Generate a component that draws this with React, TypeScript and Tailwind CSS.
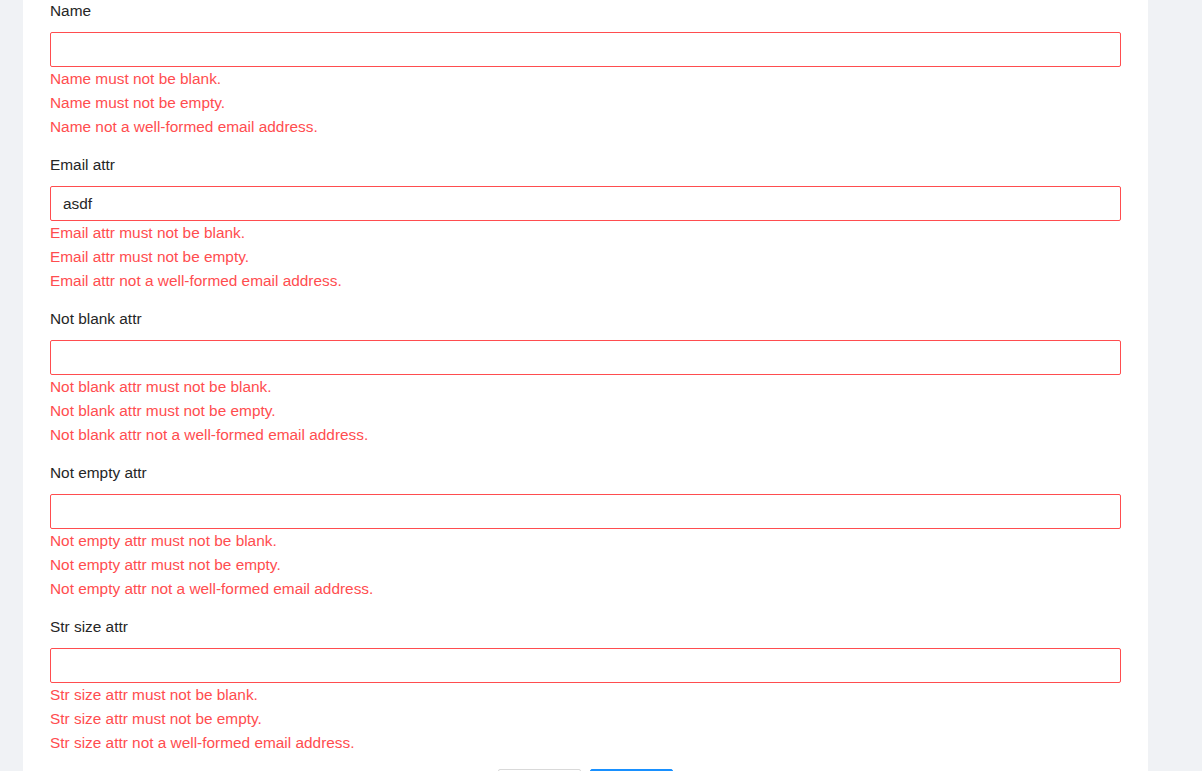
const fields = [
  { label: 'Name', value: '' },
  { label: 'Email attr', value: 'asdf' },
  { label: 'Not blank attr', value: '' },
  { label: 'Not empty attr', value: '' },
  { label: 'Str size attr', value: '' },
];

function Field({ label, value }: { label: string; value: string }) {
  return (
    <div className="mb-[15px] last-of-type:mb-[14px]">
      <div className="h-[22px] text-[15.4px] leading-[22px] text-[#262626]">{label}</div>
      <div className="mt-[10px] flex h-[35px] items-center rounded-[2px] border border-[#ff4d4f] px-[12px] text-[15.4px] text-[#262626]">
        {value}
      </div>
      <div className="text-[15.4px] leading-[24px] text-[#ff4d4f]">
        <div>{label} must not be blank.</div>
        <div>{label} must not be empty.</div>
        <div>{label} not a well-formed email address.</div>
      </div>
    </div>
  );
}

export default function App() {
  return (
    <div className="min-h-screen bg-[#f0f2f5] pl-[23px] font-['Liberation_Sans',Arial,sans-serif]">
      <div className="w-[1125px] bg-white px-[27px] pb-10">
        <div>
          {fields.map((f) => (
            <Field key={f.label} label={f.label} value={f.value} />
          ))}
        </div>
        <div className="flex justify-center gap-[9px]">
          <button className="h-[35px] w-[83px] rounded-[2px] border border-[#d9d9d9] bg-white text-[15.4px] text-[#262626]">
            Reset
          </button>
          <button className="h-[35px] w-[83px] rounded-[2px] border border-[#1890ff] bg-[#1890ff] text-[15.4px] text-white">
            Submit
          </button>
        </div>
      </div>
    </div>
  );
}
